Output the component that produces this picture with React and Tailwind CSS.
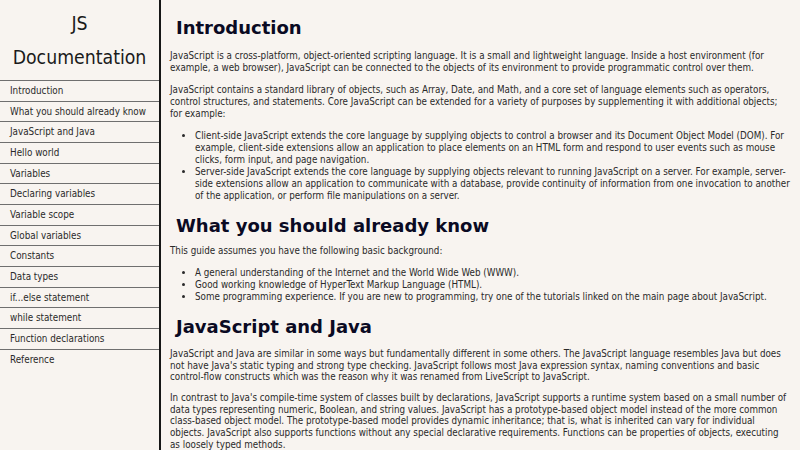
import React from "react";

const nav = [
  "Introduction",
  "What you should already know",
  "JavaScript and Java",
  "Hello world",
  "Variables",
  "Declaring variables",
  "Variable scope",
  "Global variables",
  "Constants",
  "Data types",
  "if...else statement",
  "while statement",
  "Function declarations",
  "Reference",
];

const body = "text-[9.75px] leading-[12px] text-[#2a2a2a]";
const body2 = "text-[9.75px] leading-[11.6px] text-[#2a2a2a]";
const h = "ml-[6px] text-[18px] font-bold leading-[22px] text-[#0a0a23] [font-family:'DejaVu_Sans',sans-serif]";

export default function App() {
  return (
    <div className="flex h-[450px] w-[800px] overflow-hidden bg-[#f8f4f0] [font-family:'DejaVu_Sans_Condensed','DejaVu_Sans',sans-serif]">
      <nav className="flex w-[161px] shrink-0 flex-col border-r-2 border-[#161616]">
        <header className="flex flex-col items-center pt-[7px] pb-[5px] text-[19.3px] leading-[34px] text-[#1a1a1a]">
          <span>JS</span>
          <span>Documentation</span>
        </header>
        <ul className="flex flex-col">
          {nav.map((n) => (
            <li
              key={n}
              className="h-[20.67px] border-t border-[#6f6f6f] pl-[10px] text-[9.8px] leading-[19px] text-[#2a2a2a]"
            >
              {n}
            </li>
          ))}
        </ul>
      </nav>
      <main className="flex min-w-0 flex-1 flex-col pl-[9px] pr-[10px] pt-[17px]">
        <section>
          <h1 className={h}>Introduction</h1>
          <p className={`${body} mt-[11px]`}>
            JavaScript is a cross-platform, object-oriented scripting language. It is a small and lightweight language. Inside a host environment (for example, a web browser), JavaScript can be connected to the objects of its environment to provide programmatic control over them.
          </p>
          <p className={`${body} mt-[9.5px]`}>
            JavaScript contains a standard library of objects, such as Array, Date, and Math, and a core set of language elements such as operators, control structures, and statements. Core JavaScript can be extended for a variety of purposes by supplementing it with additional objects; for example:
          </p>
          <ul className={`${body} mt-[10px] list-disc pl-[25px]`}>
            <li>
              Client-side JavaScript extends the core language by supplying objects to control a browser and its Document Object Model (DOM). For example, client-side extensions allow an application to place elements on an HTML form and respond to user events such as mouse clicks, form input, and page navigation.
            </li>
            <li>
              Server-side JavaScript extends the core language by supplying objects relevant to running JavaScript on a server. For example, server-side extensions allow an application to communicate with a database, provide continuity of information from one invocation to another of the application, or perform file manipulations on a server.
            </li>
          </ul>
        </section>
        <section className="mt-[13px]">
          <h2 className={h}>What you should already know</h2>
          <p className={`${body} mt-[8.5px]`}>This guide assumes you have the following basic background:</p>
          <ul className={`${body} mt-[10px] list-disc pl-[25px]`}>
            <li>A general understanding of the Internet and the World Wide Web (WWW).</li>
            <li>Good working knowledge of HyperText Markup Language (HTML).</li>
            <li>Some programming experience. If you are new to programming, try one of the tutorials linked on the main page about JavaScript.</li>
          </ul>
        </section>
        <section className="mt-[13px]">
          <h2 className={h}>JavaScript and Java</h2>
          <p className={`${body2} mt-[10.3px]`}>
            JavaScript and Java are similar in some ways but fundamentally different in some others. The JavaScript language resembles Java but does not have Java's static typing and strong type checking. JavaScript follows most Java expression syntax, naming conventions and basic control-flow constructs which was the reason why it was renamed from LiveScript to JavaScript.
          </p>
          <p className={`${body2} mt-[9.2px]`}>
            In contrast to Java's compile-time system of classes built by declarations, JavaScript supports a runtime system based on a small number of data types representing numeric, Boolean, and string values. JavaScript has a prototype-based object model instead of the more common class-based object model. The prototype-based model provides dynamic inheritance; that is, what is inherited can vary for individual objects. JavaScript also supports functions without any special declarative requirements. Functions can be properties of objects, executing as loosely typed methods.
          </p>
        </section>
      </main>
    </div>
  );
}
